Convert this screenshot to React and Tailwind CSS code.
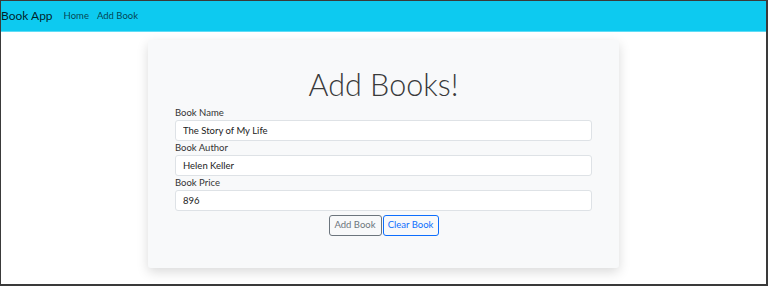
export default function App() {
  const fields = [
    { label: "Book Name", value: "The Story of My Life" },
    { label: "Book Author", value: "Helen Keller" },
    { label: "Book Price", value: "896" },
  ];

  return (
    <div
      className="box-border h-[286px] w-[768px] overflow-hidden border-t border-l border-r-2 border-b-2 border-[#3a3a3a] bg-white"
      style={{ fontFamily: 'Lato, "Open Sans", sans-serif' }}
    >
      <nav className="flex h-[31px] items-center border-b border-[#5fdcf5] bg-[#0dcaf0]">
        <span className="text-[12px] text-black/85">Book App</span>
        <div className="ml-[11px] flex gap-[8px] text-[9.5px] text-black/70">
          <a>Home</a>
          <a>Add Book</a>
        </div>
      </nav>

      <div className="mx-auto mt-[8px] box-border h-[228px] w-[471px] rounded-[3px] bg-[#f8f9fa] px-[27px] pt-[23px] shadow-[0_4px_12px_rgba(0,0,0,0.15)]">
        <h1 className="text-center text-[30.5px] font-light leading-[43px] text-[#3a3a3a]">Add Books!</h1>
        {fields.map((f) => (
          <div key={f.label}>
            <label className="block h-[14px] text-[9.5px] leading-[14px] text-[#333]">{f.label}</label>
            <input
              readOnly
              value={f.value}
              className="box-border block h-[21px] w-full rounded-[3px] border border-[#dee2e6] bg-white px-[7px] text-[9.5px] text-[#222] outline-none"
            />
          </div>
        ))}
        <div className="mt-[4px] flex justify-center gap-[1px]">
          <button className="box-border h-[21px] w-[53px] rounded-[3px] border border-[#6c757d] bg-transparent text-[9.5px] text-[#6c757d]">
            Add Book
          </button>
          <button className="box-border h-[21px] w-[56px] rounded-[3px] border border-[#0d6efd] bg-transparent text-[9.5px] text-[#0d6efd]">
            Clear Book
          </button>
        </div>
      </div>
    </div>
  );
}
